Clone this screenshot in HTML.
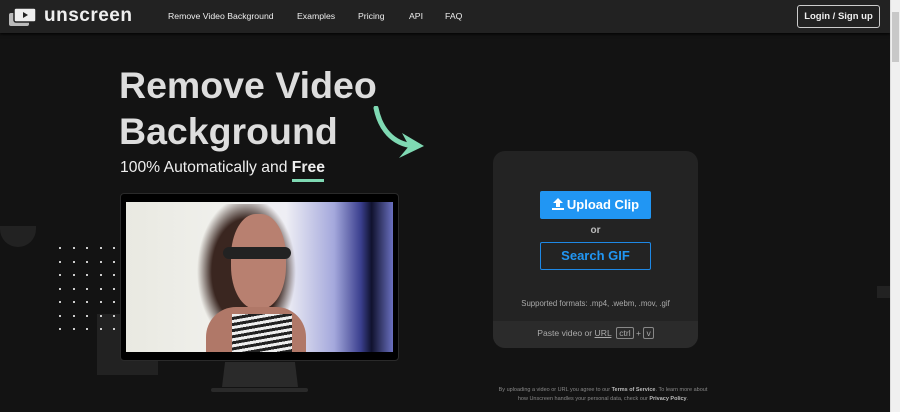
<!DOCTYPE html>
<html><head><style>
*{margin:0;padding:0;box-sizing:border-box}
body{width:900px;height:412px;background:#131313;font-family:"Liberation Sans",sans-serif;position:relative;overflow:hidden;color:#ddd}
.nav{position:absolute;left:0;top:0;width:890px;height:33px;background:#222;box-shadow:0 1px 3px #000}
.nav a{position:absolute;top:11px;font-size:8.7px;color:#eee}
.scroll{position:absolute;left:890px;top:0;width:10px;height:412px;background:#f0f0f0;border-left:1px solid #ddd}
.abs{position:absolute}
.dot{position:absolute;width:2px;height:2px;background:#ccc}
</style></head><body>
<div class="nav">
<svg class="abs" style="left:9px;top:8px" width="28" height="18"><rect x="0" y="5" width="20" height="13" rx="2" fill="#bbb"/><rect x="5" y="0" width="22" height="14" rx="2" fill="#eee" stroke="#222" stroke-width="1.5"/><path d="M14 4 L19 7 L14 10Z" fill="#222"/></svg>
<div class="abs" style="left:44px;top:5px;font-size:19px;font-weight:bold;color:#eee;letter-spacing:0.5px">unscreen</div>
<a style="left:168px">Remove Video Background</a>
<a style="left:297px">Examples</a>
<a style="left:358px">Pricing</a>
<a style="left:409px">API</a>
<a style="left:445px">FAQ</a>
<div class="abs" style="left:797px;top:5px;width:83px;height:23px;border:1px solid #ccc;border-radius:3px;font-size:9.5px;font-weight:bold;color:#eee;text-align:center;line-height:21px">Login / Sign up</div>
</div>
<div class="scroll"><div style="position:absolute;left:1px;top:12px;width:7px;height:50px;background:#c8c8c8"></div></div>
<div class="abs" style="left:877px;top:286px;width:13px;height:12px;background:#222"></div>

<div class="abs" style="left:119px;top:62px;font-size:37.5px;font-weight:bold;color:#ddd;line-height:46px">Remove Video<br>Background</div>
<div class="abs" style="left:120px;top:159px;font-size:15.7px;color:#eee">100% Automatically and <b>Free</b></div>
<div class="abs" style="left:292px;top:179px;width:32px;height:3px;background:#7fd9b3"></div>
<svg class="abs" style="left:372px;top:106px" width="56" height="56"><path d="M4 2 C8 22 20 38 42 40" stroke="#7fd9b3" stroke-width="5" fill="none" stroke-linecap="round"/><path d="M30 27 L52 40 L27 52 L37 40Z" fill="#7fd9b3"/></svg>

<div class="abs" style="left:0;top:226px;width:36px;height:21px;background:#222;border-radius:0 0 18px 18px"></div>
<div class="abs" style="left:97px;top:314px;width:61px;height:61px;background:#222"></div>
<div id="dots"></div>

<div class="abs" style="left:120px;top:193px;width:279px;height:168px;background:#000;border-radius:4px;border:1px solid #2a2a2a"></div>
<div class="abs" style="left:126px;top:202px;width:267px;height:150px;overflow:hidden;background:linear-gradient(90deg,#e9e9e1 0%,#f0f0ec 35%,#eeeef4 60%,#a4a8dc 78%,#3a3f8e 88%,#10122e 92%,#6a70c0 100%)">
<div class="abs" style="left:60px;top:2px;width:110px;height:150px;background:radial-gradient(ellipse 45% 50% at 55% 45%,#3a2620 0%,#3a2620 70%,transparent 100%)"></div>
<div class="abs" style="left:105px;top:12px;width:55px;height:95px;border-radius:45%;background:#b88070"></div>
<div class="abs" style="left:97px;top:45px;width:68px;height:12px;background:#222;border-radius:6px"></div>
<div class="abs" style="left:80px;top:105px;width:100px;height:50px;border-radius:30px 30px 0 0;background:#b07868"></div>
<div class="abs" style="left:106px;top:112px;width:60px;height:40px;background:repeating-linear-gradient(170deg,#eee 0 3px,#222 3px 6px)"></div>
</div>
<div class="abs" style="left:222px;top:362px;width:76px;height:25px;background:#2a2a2a;clip-path:polygon(4% 0,96% 0,100% 100%,0 100%)"></div>
<div class="abs" style="left:211px;top:388px;width:97px;height:4px;background:#2a2a2a;border-radius:2px"></div>

<div class="abs" style="left:493px;top:151px;width:205px;height:197px;background:#232323;border-radius:12px;overflow:hidden">
<div class="abs" style="left:0;top:170px;width:205px;height:27px;background:#2b2b2b"></div>
</div>
<div class="abs" style="left:540px;top:191px;width:111px;height:28px;background:#2196f3;border-radius:2px;color:#fff;font-weight:bold;font-size:13px;text-align:center;line-height:28px">
<svg width="12" height="12" style="vertical-align:-1px;margin-right:3px"><path d="M6 0 L11 5 L8 5 L8 9 L4 9 L4 5 L1 5Z M0 10 H12 V12 H0Z" fill="#fff"/></svg>Upload Clip</div>
<div class="abs" style="left:540px;top:225px;width:111px;text-align:center;font-size:10px;font-weight:bold;color:#bbb">or</div>
<div class="abs" style="left:540px;top:242px;width:111px;height:28px;border:1px solid #1e88e5;border-radius:2px;color:#2196f3;font-weight:bold;font-size:13px;text-align:center;line-height:26px">Search GIF</div>
<div class="abs" style="left:493px;top:299px;width:205px;text-align:center;font-size:7.8px;color:#aaa">Supported formats: .mp4, .webm, .mov, .gif</div>
<div class="abs" style="left:493px;top:328px;width:205px;text-align:center;font-size:8.6px;color:#aaa">Paste video or <u>URL</u> &nbsp;<span style="border:1px solid #888;border-radius:2px;padding:0 2px">ctrl</span> + <span style="border:1px solid #888;border-radius:2px;padding:0 2px">v</span></div>
<div class="abs" style="left:480px;top:386px;width:246px;text-align:center;font-size:5.5px;color:#888;line-height:8.5px">By uploading a video or URL you agree to our <b style="color:#bbb">Terms of Service</b>. To learn more about<br>how Unscreen handles your personal data, check our <b style="color:#bbb">Privacy Policy</b>.</div>
<script>
var d=document.getElementById('dots'),h='';
for(var r=0;r<7;r++)for(var c=0;c<5;c++)h+='<div class="dot" style="left:'+(59+c*13.5)+'px;top:'+(247+r*13.5)+'px"></div>';
d.innerHTML=h;
</script>
</body></html>
